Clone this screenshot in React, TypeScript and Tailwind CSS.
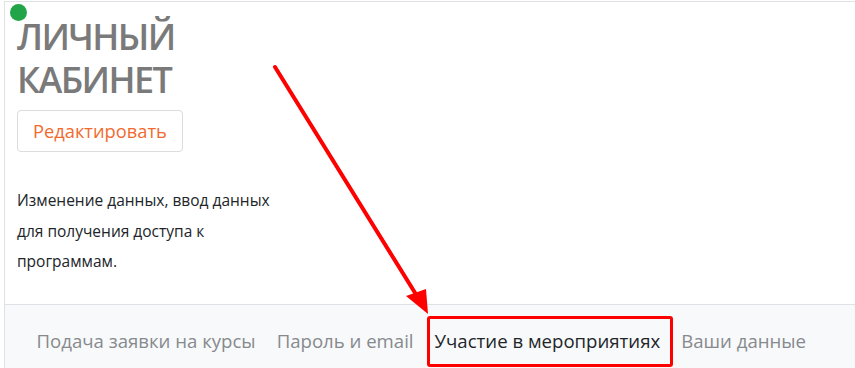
import { useState } from 'react';

const tabs = ['Подача заявки на курсы', 'Пароль и email', 'Участие в мероприятиях', 'Ваши данные'];

export default function App() {
  const [active, setActive] = useState(2);

  return (
    <div className="relative w-[855px] h-[368px] overflow-hidden bg-white" style={{ fontFamily: '"Open Sans", "Noto Sans", sans-serif' }}>
      <div className="ml-[4px] mt-[1px] h-[367px] border-l border-t border-[#dee2e6] flex flex-col">
        <div className="pl-[12px] pt-[13px] flex-1">
          <h1 className="text-[36px] leading-[43px] font-semibold text-[#7a7a7a] tracking-[-1.6px]">
            ЛИЧНЫЙ<br />КАБИНЕТ
          </h1>
          <button className="mt-[9px] h-[42px] px-[15px] border border-[#dcdcdc] rounded-[4px] text-[18.3px] text-[#f26a2e] bg-white">
            Редактировать
          </button>
          <p className="mt-[33px] w-[275px] text-[15.5px] leading-[30.5px] text-[#212529]">
            Изменение данных, ввод данных для получения доступа к программам.
          </p>
        </div>
        <nav className="h-[64px] bg-[#f8f9fa] border-t border-[#dee2e6] flex items-center pl-[21px]">
          {tabs.map((t, i) => (
            <button
              key={t}
              onClick={() => setActive(i)}
              className={`px-[10.5px] pt-[9px] text-[18.6px] ${i === active ? 'text-[#212529]' : 'text-[#868a8e]'}`}
            >
              {t}
            </button>
          ))}
        </nav>
      </div>

      {/* status dot */}
      <div className="absolute left-[10px] top-[4px] w-[17px] h-[17px] rounded-full bg-[#22a548]" />

      {/* annotation */}
      <div className="absolute left-[427px] top-[316px] w-[246px] h-[51px] border-[3px] border-[#ff0000] rounded-[3px]" />
      <svg className="absolute left-0 top-0 pointer-events-none" width="855" height="368">
        <line x1="275" y1="67" x2="417" y2="296" stroke="#ff0000" strokeWidth="4" strokeLinecap="round" />
        <polygon points="428,314 406,296 426,289" fill="#ff0000" />
      </svg>
    </div>
  );
}
